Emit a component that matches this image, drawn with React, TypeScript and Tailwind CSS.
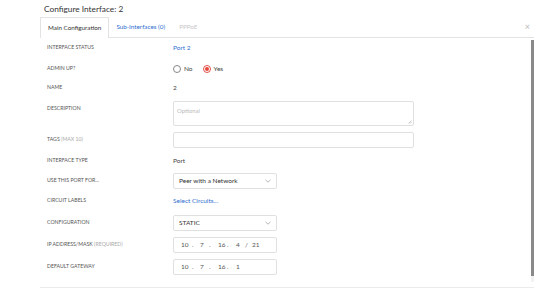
import React from "react";

const Label = ({ children, extra }: { children: React.ReactNode; extra?: string }) => (
  <div className="w-[126px] shrink-0 text-[5.2px] text-[#555] uppercase">
    {children}
    {extra && <span className="text-[#aaa]"> {extra}</span>}
  </div>
);

const Chevron = () => (
  <svg width="6" height="4" viewBox="0 0 6 4" className="ml-auto">
    <path d="M0.5 0.8 L3 3.2 L5.5 0.8" fill="none" stroke="#999" strokeWidth="0.7" />
  </svg>
);

export default function App() {
  return (
    <div
      className="relative w-[554px] h-[306px] bg-white overflow-hidden"
      style={{ fontFamily: "Lato, 'Open Sans', sans-serif" }}
    >
      <div className="pl-[44px] pt-[3px] h-[17px] text-[8.3px] text-[#333]">Configure Interface: 2</div>
      <div className="flex items-end h-[21px] ml-[40px] mr-[20px]">
        <div className="h-[21px] px-[7px] border border-b-0 border-[#e3e3e3] flex items-center text-[6.3px] text-[#333] bg-white">
          Main Configuration
        </div>
        <div className="relative flex-1 h-[21px] border-b border-[#e3e3e3] flex items-center">
          <span className="ml-[7px] text-[6.3px] text-[#2f6fd0]">Sub-Interfaces (0)</span>
          <span className="ml-[14px] text-[6.3px] text-[#c8c8c8]">PPPoE</span>
          <span className="absolute right-[4px] top-[5px] text-[9px] text-[#bbb] leading-none">×</span>
        </div>
      </div>

      <div className="absolute left-[531px] top-[40px] w-[3px] h-[236px] bg-[#8a8a8a]" />
      <div className="absolute left-[531px] top-[276px] w-[3px] h-[6px] bg-[#f2f2f2]" />

      <div className="pl-[47px] flex flex-col">
        <div className="flex items-center h-[16px] mt-[2px]">
          <Label>Interface Status</Label>
          <span className="text-[6.5px] text-[#2f6fd0]">Port 2</span>
        </div>
        <div className="flex items-center h-[16px] mt-[5px]">
          <Label>Admin Up?</Label>
          <div className="flex items-center text-[6.5px] text-[#444]">
            <span className="w-[8px] h-[8px] rounded-full border border-[#888] bg-white" />
            <span className="ml-[3px]">No</span>
            <span className="ml-[10px] w-[8px] h-[8px] rounded-full border border-[#e0524a] flex items-center justify-center">
              <span className="w-[4px] h-[4px] rounded-full bg-[#e8463c]" />
            </span>
            <span className="ml-[3px]">Yes</span>
          </div>
        </div>
        <div className="flex items-center h-[16px] mt-[3px]">
          <Label>Name</Label>
          <span className="text-[6.5px] text-[#444]">2</span>
        </div>
        <div className="flex items-start h-[25px] mt-[5px]">
          <div className="pt-[4px]">
            <Label>Description</Label>
          </div>
          <div className="relative w-[241px] h-[25px] border border-[#e0e0e0] rounded-[2px] px-[3px] pt-[4px] text-[6px] text-[#bbb]">
            Optional
            <svg width="4" height="4" viewBox="0 0 4 4" className="absolute right-[1px] bottom-[1px]">
              <path d="M0.5 3.5 L3.5 0.5 M2 3.5 L3.5 2" stroke="#999" strokeWidth="0.5" />
            </svg>
          </div>
        </div>
        <div className="flex items-center h-[16px] mt-[6px]">
          <Label extra="(MAX 10)">Tags</Label>
          <div className="w-[241px] h-[16px] border border-[#e0e0e0] rounded-[2px]" />
        </div>
        <div className="flex items-center h-[16px] mt-[5px]">
          <Label>Interface Type</Label>
          <span className="text-[6.5px] text-[#444]">Port</span>
        </div>
        <div className="flex items-center h-[16px] mt-[4px]">
          <Label>Use this port for...</Label>
          <div className="w-[104px] h-[16px] border border-[#e0e0e0] rounded-[2px] flex items-center pl-[5px] pr-[5px] text-[6.5px] text-[#333]">
            Peer with a Network
            <Chevron />
          </div>
        </div>
        <div className="flex items-center h-[16px] mt-[4px]">
          <Label>Circuit Labels</Label>
          <span className="text-[6.5px] text-[#2f6fd0]">Select Circuits...</span>
        </div>
        <div className="flex items-center h-[16px] mt-[6px]">
          <Label>Configuration</Label>
          <div className="w-[104px] h-[16px] border border-[#e0e0e0] rounded-[2px] flex items-center pl-[5px] pr-[5px] text-[6.5px] text-[#333]">
            STATIC
            <Chevron />
          </div>
        </div>
        <div className="flex items-center h-[16px] mt-[6px]">
          <Label extra="(REQUIRED)">IP Address/Mask</Label>
          <div className="w-[104px] h-[16px] border border-[#e0e0e0] rounded-[2px] flex items-center pl-[7px] text-[6.5px] text-[#555]">
            <span className="w-[11px]">10</span>
            <span className="w-[8px]">.</span>
            <span className="w-[9px]">7</span>
            <span className="w-[9px]">.</span>
            <span className="w-[9px]">16</span>
            <span className="w-[9px]">.</span>
            <span className="w-[9px]">4</span>
            <span className="w-[7px]">/</span>
            <span>21</span>
          </div>
        </div>
        <div className="flex items-center h-[16px] mt-[6px]">
          <Label>Default Gateway</Label>
          <div className="w-[104px] h-[16px] border border-[#e0e0e0] rounded-[2px] flex items-center pl-[7px] text-[6.5px] text-[#555]">
            <span className="w-[11px]">10</span>
            <span className="w-[8px]">.</span>
            <span className="w-[9px]">7</span>
            <span className="w-[9px]">.</span>
            <span className="w-[9px]">16</span>
            <span className="w-[9px]">.</span>
            <span>1</span>
          </div>
        </div>
      </div>
      <div className="absolute left-[40px] top-[287px] w-[494px] h-px bg-[#ebebeb]" />
    </div>
  );
}
